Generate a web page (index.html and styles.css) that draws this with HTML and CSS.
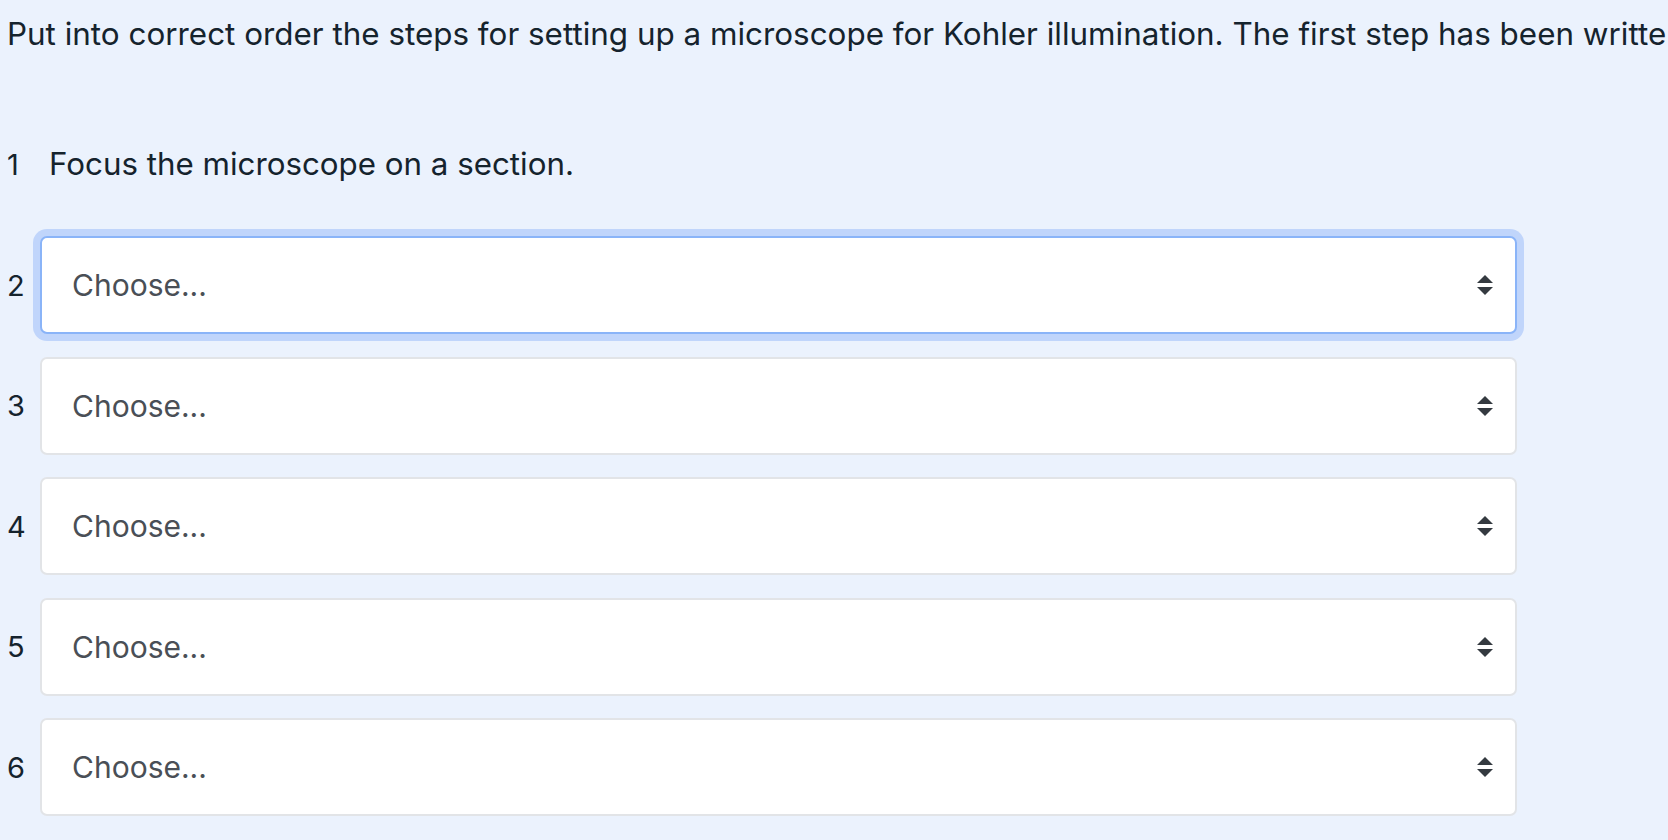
FILE: index.html
```html
<!DOCTYPE html>
<html lang="en">
<head>
    <meta charset="UTF-8">
    <meta name="viewport" content="width=device-width, initial-scale=1.0">
    <title>Kohler illumination</title>
    <link rel="stylesheet" href="styles.css">
</head>
<body>
    <p class="question">Put into correct order the steps for setting up a microscope for Kohler illumination. The first step has been written for you.</p>
    <div class="steps">
        <div class="step step-given">
            <span class="step-num">1</span>
            <span class="step-text">Focus the microscope on a section.</span>
        </div>
        <div class="step">
            <span class="step-num">2</span>
            <div class="select-wrap">
                <select class="step-select is-focused">
                    <option>Choose...</option>
                </select>
                <svg class="select-arrow" width="16" height="21" viewBox="0 0 16 21"><path d="M8 0L16 8H0Z M0 12H16L8 20Z" fill="#343a40"/></svg>
            </div>
        </div>
        <div class="step">
            <span class="step-num">3</span>
            <div class="select-wrap">
                <select class="step-select">
                    <option>Choose...</option>
                </select>
                <svg class="select-arrow" width="16" height="21" viewBox="0 0 16 21"><path d="M8 0L16 8H0Z M0 12H16L8 20Z" fill="#343a40"/></svg>
            </div>
        </div>
        <div class="step">
            <span class="step-num">4</span>
            <div class="select-wrap">
                <select class="step-select">
                    <option>Choose...</option>
                </select>
                <svg class="select-arrow" width="16" height="21" viewBox="0 0 16 21"><path d="M8 0L16 8H0Z M0 12H16L8 20Z" fill="#343a40"/></svg>
            </div>
        </div>
        <div class="step">
            <span class="step-num">5</span>
            <div class="select-wrap">
                <select class="step-select">
                    <option>Choose...</option>
                </select>
                <svg class="select-arrow" width="16" height="21" viewBox="0 0 16 21"><path d="M8 0L16 8H0Z M0 12H16L8 20Z" fill="#343a40"/></svg>
            </div>
        </div>
        <div class="step">
            <span class="step-num">6</span>
            <div class="select-wrap">
                <select class="step-select">
                    <option>Choose...</option>
                </select>
                <svg class="select-arrow" width="16" height="21" viewBox="0 0 16 21"><path d="M8 0L16 8H0Z M0 12H16L8 20Z" fill="#343a40"/></svg>
            </div>
        </div>
    </div>
</body>
</html>
```

FILE: styles.css
```css
body {
    margin: 0;
    padding: 0 0 0 7px;
    background-color: #ebf2fd;
    color: #15232d;
    font-family: Inter, "Noto Sans", sans-serif;
    overflow: hidden;
}
.question {
    margin: 0;
    padding-top: 14px;
    font-size: 31.4px;
    line-height: 40px;
    white-space: nowrap;
    overflow: hidden;
}
.steps {
    margin-top: 90px;
}
.step {
    display: flex;
    align-items: center;
    margin-bottom: 22.5px;
}
.step-given {
    margin-bottom: 52px;
}
.step-num {
    width: 33px;
    font-size: 29px;
    flex-shrink: 0;
}
.step-text {
    font-size: 31.3px;
    line-height: 40px;
    margin-left: 9px;
}
.select-wrap {
    position: relative;
    width: 1477px;
}
.step-select {
    appearance: none;
    -webkit-appearance: none;
    width: 100%;
    height: 98px;
    padding: 0 60px 0 30px;
    font-family: Inter, "Noto Sans", sans-serif;
    font-size: 30px;
    color: #4a4f56;
    background-color: #fff;
    border: 2px solid #e2e4e7;
    border-radius: 7px;
    outline: none;
}
.step-select.is-focused {
    border-color: #8ab4f8;
    box-shadow: 0 0 0 7px #c0d5fb;
}
.select-arrow {
    position: absolute;
    right: 24px;
    top: 39px;
}
```
